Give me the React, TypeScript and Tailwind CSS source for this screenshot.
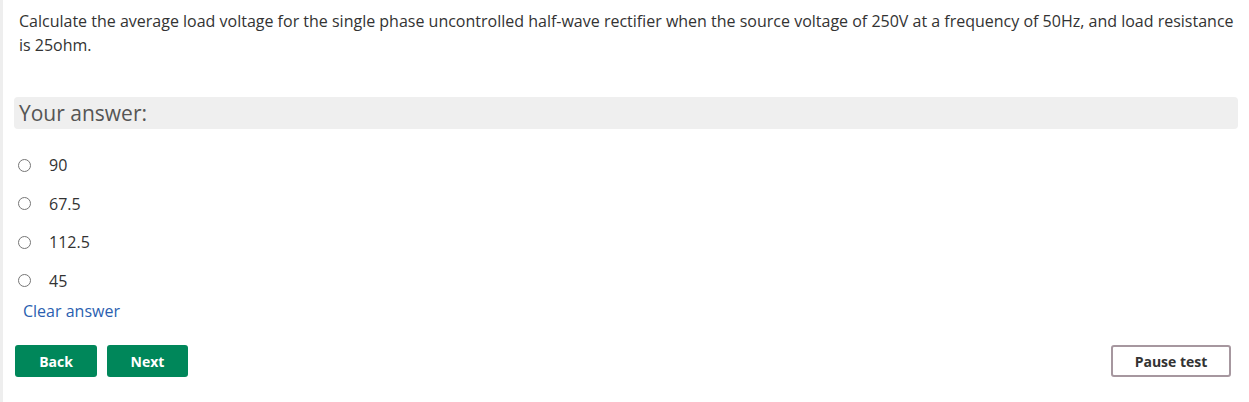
const options = ['90', '67.5', '112.5', '45'];

export default function App() {
  return (
    <div className="flex h-[402px] w-full bg-white font-['Open_Sans',sans-serif] text-[#333]">
      <div className="w-[3px] shrink-0 bg-[#eeeeee]" />
      <div className="flex-1 pl-[11px] pr-[11px]">
        <p className="mr-[-8px] pl-[5px] pt-[9px] text-[16px] leading-[24px]">
          Calculate the average load voltage for the single phase uncontrolled half-wave rectifier when the source
          voltage of 250V at a frequency of 50Hz, and load resistance is 25ohm.
        </p>

        <div className="mt-[40px] h-[32px] rounded-[4px] bg-[#efefef] pl-[5px] text-[21px] leading-[32px] text-[#555]">
          Your answer:
        </div>

        <div className="mt-[17px] pl-[4px]">
          {options.map((o) => (
            <label key={o} className="flex h-[38.5px] items-center text-[16px]">
              <span className="h-[13px] w-[13px] rounded-full border border-[#767676] bg-white" />
              <span className="ml-[18px]">{o}</span>
            </label>
          ))}
        </div>

        <div className="pl-[9px] text-[16px] leading-[22px] text-[#2b5fb0]">Clear answer</div>

        <div className="mt-[23px] flex items-center">
          <button className="ml-[1px] h-[32px] w-[82px] rounded-[3px] bg-[#00875a] text-[14px] font-bold text-white">
            Back
          </button>
          <button className="ml-[10px] h-[32px] w-[81px] rounded-[3px] bg-[#00875a] text-[14px] font-bold text-white">
            Next
          </button>
          <div className="flex-1" />
          <button className="mr-[7px] h-[32px] w-[120px] rounded-[3px] border-2 border-[#a6979f] bg-white text-[14px] font-bold text-[#333]">
            Pause test
          </button>
        </div>
      </div>
    </div>
  );
}
